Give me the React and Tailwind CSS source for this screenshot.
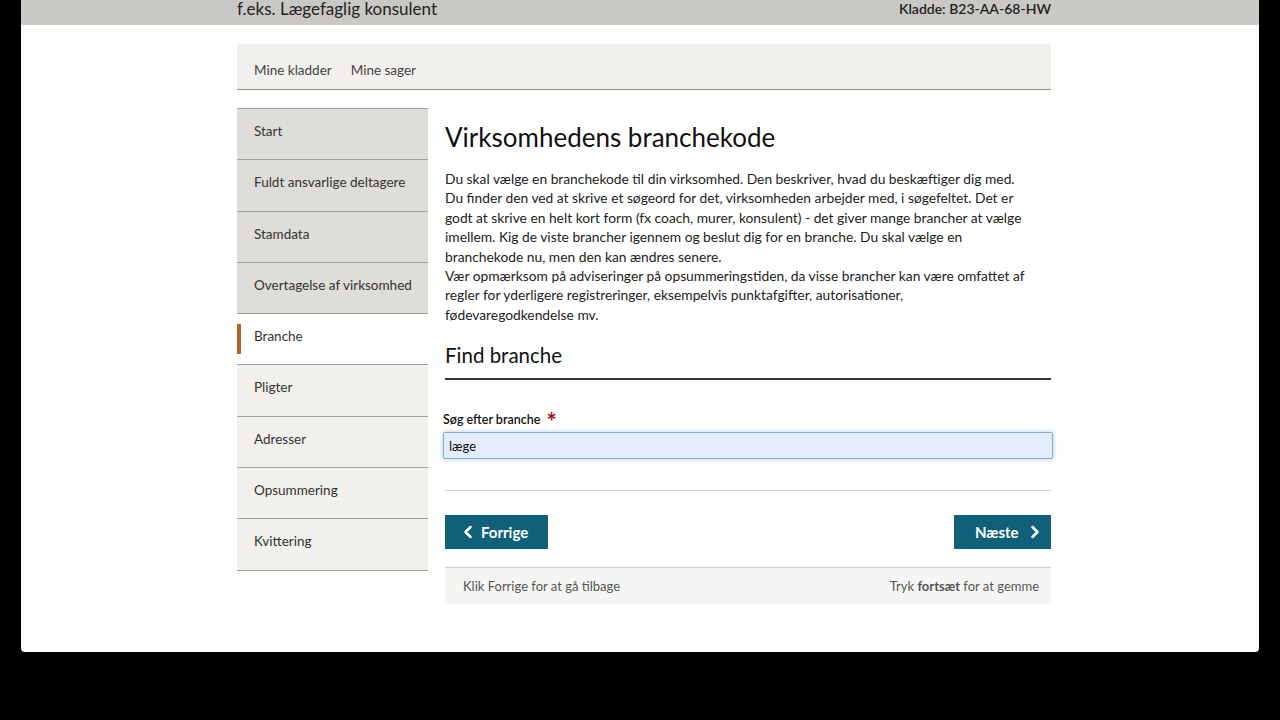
import { ChevronLeft, ChevronRight } from 'lucide-react'

const STEPS = [
  { label: 'Start', state: 'done' },
  { label: 'Fuldt ansvarlige deltagere', state: 'done' },
  { label: 'Stamdata', state: 'done' },
  { label: 'Overtagelse af virksomhed', state: 'done' },
  { label: 'Branche', state: 'active' },
  { label: 'Pligter', state: 'todo' },
  { label: 'Adresser', state: 'todo' },
  { label: 'Opsummering', state: 'todo' },
  { label: 'Kvittering', state: 'todo' },
]

const STEP_BG = {
  done: 'bg-[#dfddd9]',
  active: 'bg-white',
  todo: 'bg-[#f2f0ec]',
}

// line breaks as the page shows them
const INTRO = [
  'Du skal vælge en branchekode til din virksomhed. Den beskriver, hvad du beskæftiger dig med.',
  'Du finder den ved at skrive et søgeord for det, virksomheden arbejder med, i søgefeltet. Det er',
  'godt at skrive en helt kort form (fx coach, murer, konsulent) - det giver mange brancher at vælge',
  'imellem. Kig de viste brancher igennem og beslut dig for en branche. Du skal vælge en',
  'branchekode nu, men den kan ændres senere.',
  'Vær opmærksom på adviseringer på opsummeringstiden, da visse brancher kan være omfattet af',
  'regler for yderligere registreringer, eksempelvis punktafgifter, autorisationer,',
  'fødevaregodkendelse mv.',
]

function StepItem({ label, state }) {
  return (
    <div className={`relative h-[51.3px] border-b border-[#a3a19d] pl-[17px] pt-[14px] text-[13.5px] leading-[17px] text-[#333] ${STEP_BG[state]}`}>
      {state === 'active' && <span className="absolute left-0 top-[10px] h-[30px] w-[4px] bg-[#b0652b]" />}
      {label}
    </div>
  )
}

export default function App() {
  return (
    <div className="min-h-[720px] bg-black font-['Lato','Liberation_Sans',sans-serif]">
      <div className="ml-[21px] mr-[21px] h-[652px] rounded-b-[4px] bg-white">

        {/* Top bar */}
        <div className="h-[25px] bg-[#c9c8c4]">
          <div className="ml-[216px] flex w-[814px] items-start justify-between">
            <span className="text-[17px] leading-[17px] text-[#222]">f.eks. Lægefaglig konsulent</span>
            <span className="text-[14px] font-semibold leading-[17px] text-[#222]">Kladde: B23-AA-68-HW</span>
          </div>
        </div>

        <div className="ml-[216px] w-[814px]">
          {/* Nav */}
          <div className="mt-[19px] flex h-[46px] items-center gap-[19px] border-b border-[#8d8b88] bg-[#f2f0ec] pl-[17px] pt-[7px]">
            <span className="text-[13.5px] text-[#444]">Mine kladder</span>
            <span className="text-[13.5px] text-[#444]">Mine sager</span>
          </div>

          <div className="mt-[18px] flex gap-[17px]">
            {/* Sidebar */}
            <div className="w-[191px] shrink-0 border-t border-[#a3a19d]">
              {STEPS.map(s => <StepItem key={s.label} {...s} />)}
            </div>

            {/* Main */}
            <div className="flex-1 pt-[13px]">
              <h1 className="text-[26px] leading-[32px] text-[#111]">Virksomhedens branchekode</h1>
              <p className="mt-[16px] text-[13.8px] leading-[19.4px] text-[#222]">
                {INTRO.map(line => <span key={line} className="block whitespace-nowrap">{line}</span>)}
              </p>

              <h2 className="mt-[18px] border-b-2 border-[#333] pb-[10px] text-[20.5px] leading-[26px] text-[#111]">Find branche</h2>

              <div className="-mx-[2px] mt-[32px]">
                <label className="flex items-start gap-[6px] text-[12.5px] font-semibold leading-[16px] text-[#111]">
                  Søg efter branche
                  <span className="-mt-[1px] text-[24px] font-bold leading-[22px] text-[#a0101a]">*</span>
                </label>
                <input
                  readOnly
                  value="læge"
                  className="-mt-[1px] block h-[27px] w-full rounded-[2px] border border-[#86acd6] bg-[#e3edfc] px-[5px] text-[13px] text-[#111] shadow-[0_0_4px_rgba(90,150,220,0.55)] outline-none"
                />
              </div>

              <div className="mt-[31px] border-t border-[#cfcfcf]" />

              <div className="mt-[24px] flex justify-between">
                <button className="flex h-[34px] w-[103px] items-center gap-[3px] bg-[#0f6179] pl-[13px] text-[15px] font-bold text-white">
                  <ChevronLeft className="h-[20px] w-[20px]" strokeWidth={3} />
                  Forrige
                </button>
                <button className="flex h-[34px] w-[97px] items-center gap-[6px] bg-[#0f6179] pl-[21px] text-[15px] font-bold text-white">
                  Næste
                  <ChevronRight className="h-[20px] w-[20px]" strokeWidth={3} />
                </button>
              </div>

              <div className="mt-[18px] flex h-[37px] items-center justify-between border-t border-[#cfcfcf] bg-[#f5f5f4] pl-[18px] pr-[12px] pt-[1px]">
                <span className="text-[13px] text-[#555]">Klik Forrige for at gå tilbage</span>
                <span className="text-[13px] text-[#555]">Tryk <b className="font-bold">fortsæt</b> for at gemme</span>
              </div>
            </div>
          </div>
        </div>
      </div>
    </div>
  )
}
